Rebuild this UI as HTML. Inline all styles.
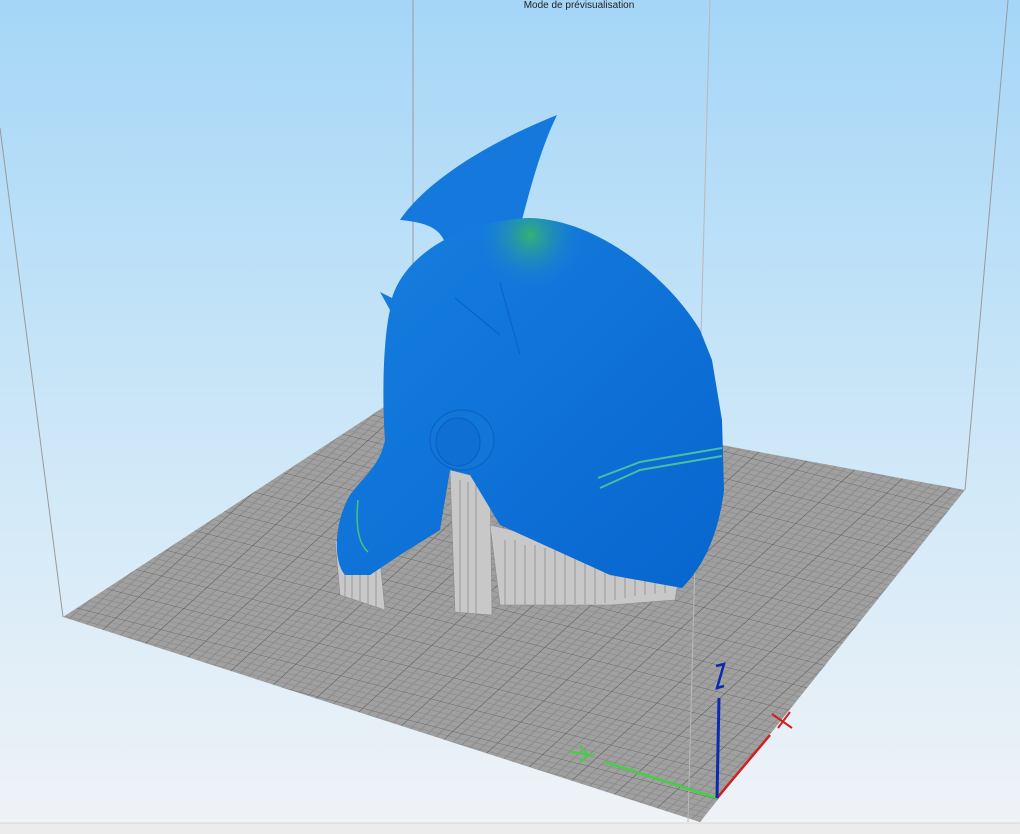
<!DOCTYPE html>
<html><head><meta charset="utf-8"><style>
html,body{margin:0;padding:0;width:1020px;height:834px;overflow:hidden;font-family:"Liberation Sans",sans-serif}
</style></head><body>
<svg width="1020" height="834" viewBox="0 0 1020 834" xmlns="http://www.w3.org/2000/svg">
<defs>
<linearGradient id="bg" x1="0" y1="0" x2="0" y2="1">
<stop offset="0" stop-color="#a5d6f7"/><stop offset="0.55" stop-color="#cfe8f8"/><stop offset="1" stop-color="#f0f3f7"/>
</linearGradient>
<pattern id="grid" patternUnits="userSpaceOnUse" width="50" height="50" patternTransform="matrix(-0.9,-0.231,0.46,-0.42,700,822)">
<rect width="50" height="50" fill="#a0a0a0"/>
<path d="M10 0V50M20 0V50M30 0V50M40 0V50M0 10H50M0 20H50M0 30H50M0 40H50" stroke="#888" stroke-width="1.1" fill="none"/>
<path d="M0 0V50M0 0H50" stroke="#606060" stroke-width="1.6" fill="none"/>
</pattern>
<linearGradient id="hb" x1="0" y1="0" x2="1" y2="1">
<stop offset="0" stop-color="#1680e0"/><stop offset="1" stop-color="#0865cf"/>
</linearGradient>
<radialGradient id="gr" cx="530" cy="235" r="55" gradientUnits="userSpaceOnUse">
<stop offset="0" stop-color="#3cc05a" stop-opacity="0.8"/><stop offset="1" stop-color="#1680e0" stop-opacity="0"/>
</radialGradient>
</defs>
<rect width="1020" height="834" fill="url(#bg)"/>
<text x="579" y="8" font-size="10" text-anchor="middle" fill="#222">Mode de prévisualisation</text>
<line x1="0" y1="128" x2="63" y2="617" stroke="#9a9a9a"/>
<line x1="413" y1="0" x2="413" y2="390" stroke="#9a9a9a"/>
<line x1="1008" y1="0" x2="965" y2="490" stroke="#9a9a9a"/>
<polygon points="700,822 63,617 413,388 965,490" fill="url(#grid)"/>
<line x1="710" y1="0" x2="688" y2="822" stroke="#b8b8b8"/>
<g fill="#c8c8c8" stroke="#8a8a8a" stroke-width="0.6">
<path d="M335,540 L380,560 L385,610 L340,595 Z"/>
<path d="M450,470 L490,480 L492,615 L455,612 Z"/>
<path d="M490,525 L680,570 L675,600 L610,605 L500,605 Z"/>
</g>
<g stroke="#999" stroke-width="1">
<path d="M345 560V598M352 562V602M360 565V604M368 567V606M376 570V608M460 480V612M468 482V613M476 484V614M505 540V605M515 540V605M525 545V606M535 545V606M545 548V606M555 550V606M565 552V605M575 555V604M585 558V604M595 560V604M605 562V603M615 565V600M625 565V598M635 568V596M645 570V595M655 572V594M665 574V593"/>
</g>
<path d="M400,220 C420,190 470,150 557,115 C540,150 530,190 522,220 L470,238 L445,243 C440,228 425,222 400,220 Z" fill="#1478dc"/>
<path d="M380,292 L392,298 C405,255 460,220 530,218 C600,220 670,280 700,330 L712,360 L722,420 L724,490 C718,540 700,570 682,588 L610,575 L500,525 L470,475 L450,470 L440,530 L400,555 L370,575 L345,575 C332,560 335,520 350,495 C365,475 380,465 385,440 C382,400 383,340 390,310 Z" fill="url(#hb)"/>
<path d="M380,292 L392,298 C405,255 460,220 530,218 C600,220 670,280 700,330 L712,360 L722,420 L724,490 C718,540 700,570 682,588 L610,575 L500,525 L470,475 L450,470 L440,530 L400,555 L370,575 L345,575 C332,560 335,520 350,495 C365,475 380,465 385,440 C382,400 383,340 390,310 Z" fill="url(#gr)"/>
<ellipse cx="462" cy="440" rx="32" ry="30" fill="#1275d8" stroke="#0a5fbf"/>
<ellipse cx="458" cy="442" rx="22" ry="24" fill="#0f6fd3" stroke="#0a5fbf"/>
<path d="M598,478 L640,462 L722,448 M600,488 L640,470 L722,456" stroke="#46c0a0" stroke-width="2" fill="none"/>
<path d="M500,283 L520,355 M455,298 L500,335" stroke="#0b64c4" stroke-width="1.2" fill="none"/>
<path d="M358,500 C355,530 360,545 368,552" stroke="#4cc07a" stroke-width="1.5" fill="none"/>
<line x1="717" y1="798" x2="605" y2="762" stroke="#44d044" stroke-width="2.5"/>
<path d="M570,752 L595,755 M580,745 L588,755 L580,762" stroke="#44d044" stroke-width="2" fill="none"/>
<line x1="717" y1="798" x2="770" y2="735" stroke="#d02020" stroke-width="2.5"/>
<path d="M772,714 L792,728 M778,728 L790,712" stroke="#d02020" stroke-width="2" fill="none"/>
<line x1="717" y1="798" x2="719" y2="698" stroke="#0a2ab0" stroke-width="3"/>
<path d="M716,666 L724,664 L717,688 L724,686" stroke="#0a2ab0" stroke-width="2.5" fill="none"/>
<rect x="0" y="823" width="1020" height="11" fill="#ececec"/>
<line x1="0" y1="823" x2="1020" y2="823" stroke="#d8d8d8"/>
</svg>
</body></html>
